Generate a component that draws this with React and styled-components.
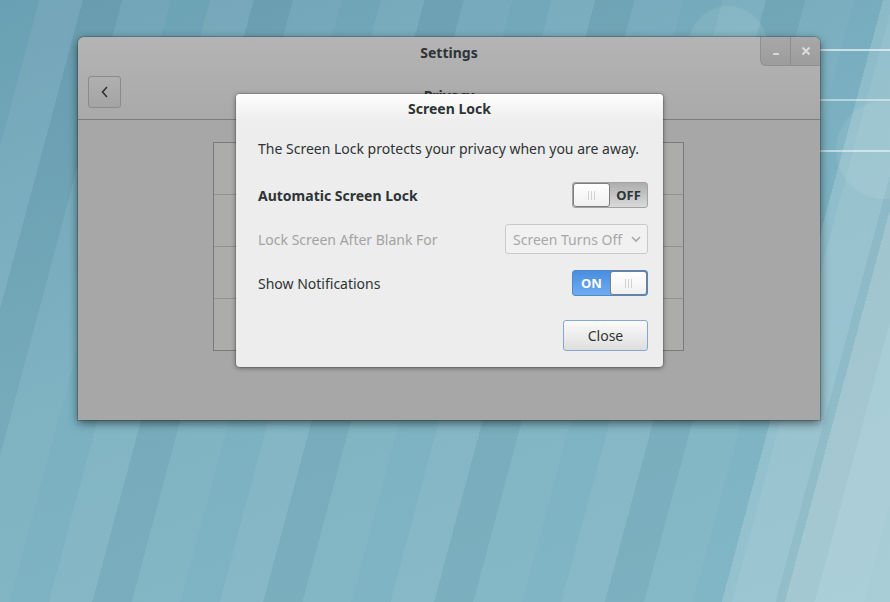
import React from 'react'
import styled, { createGlobalStyle } from 'styled-components'

const font = '"Noto Sans", "DejaVu Sans", sans-serif'
const ink = '#2e3436'

const GlobalStyle = createGlobalStyle`
  html, body {
    margin: 0;
    padding: 0;
  }
  body {
    font-family: ${font};
    font-size: 14px;
    color: ${ink};
  }
`

const wallLine = (y, a = 0.6) =>
  `linear-gradient(rgba(255,255,255,${a}), rgba(255,255,255,${a})) 820px ${y}px / 70px 2px no-repeat`

const Desktop = styled.div`
  width: 890px;
  height: 602px;
  overflow: hidden;
  box-sizing: border-box;
  padding: 37px 0 0 78px;
  background:
    ${wallLine(49)},
    ${wallLine(99, 0.45)},
    ${wallLine(150, 0.5)},
    radial-gradient(circle at 728px 45px, rgba(255,255,255,0.08) 0 38px, transparent 40px),
    radial-gradient(circle at 885px 150px, rgba(255,255,255,0.08) 0 48px, transparent 50px),
    linear-gradient(105deg, transparent 0 84%, rgba(255,255,255,0.16) 84% 90%, rgba(255,255,255,0.3) 90% 100%),
    repeating-linear-gradient(
      105deg,
      rgba(255,255,255,0) 0 38px,
      rgba(255,255,255,0.06) 38px 80px,
      rgba(0,0,0,0.03) 80px 118px,
      rgba(255,255,255,0.04) 118px 165px
    ),
    linear-gradient(160deg, #6aa0b3 0%, #7ab0c0 45%, #82b7c6 100%);
`

const Window = styled.div`
  position: relative;
  width: 742px;
  height: 383px;
  border-radius: 6px 6px 0 0;
  box-shadow: 0 3px 10px rgba(0, 0, 0, 0.55), 0 0 0 1px rgba(0, 0, 0, 0.18);
  display: flex;
  flex-direction: column;
  overflow: hidden;
`

const Header = styled.header`
  height: 82px;
  border-bottom: 1px solid #7c7c7c;
  background: linear-gradient(#b4b4b4, #a9a9a9);
  display: grid;
  grid-template-rows: 28px 1fr;
`

const HeaderRow = styled.div`
  display: grid;
  grid-template-columns: 1fr auto 1fr;
  align-items: ${(p) => (p.$top ? 'start' : 'center')};
  padding: 0 ${(p) => (p.$top ? 0 : 10)}px;
`

const Title = styled.div`
  font-weight: bold;
  font-size: 14px;
  color: ${ink};
  padding-top: ${(p) => p.$pt || 0}px;
`

const BackButton = styled.button`
  width: 33px;
  height: 32px;
  padding: 0;
  border: 1px solid #8a8a8a;
  border-radius: 3px;
  background: linear-gradient(#b0b0b0, #a4a4a4);
  display: flex;
  align-items: center;
  justify-content: center;
  justify-self: start;
`

const Controls = styled.div`
  justify-self: end;
  display: flex;
  height: 28px;
  border-left: 1px solid #909090;
  border-bottom: 1px solid #909090;
  border-bottom-left-radius: 6px;
  background: linear-gradient(#a8a8a8, #9c9c9c);
  overflow: hidden;
`

const ControlButton = styled.div`
  width: 29px;
  display: flex;
  align-items: center;
  justify-content: center;
  & + & {
    border-left: 1px solid #8e8e8e;
  }
`

const Body = styled.main`
  flex: 1;
  background: #a7a7a7;
  padding: 22px 0 0 135px;
`

const List = styled.div`
  width: 469px;
  border: 1px solid #7a7a7a;
  background: #acacab;
`

const ListRow = styled.div`
  height: 51px;
  & + & {
    border-top: 1px solid #919191;
  }
`

const Dialog = styled.div`
  position: absolute;
  left: 158px;
  top: 57px;
  width: 427px;
  height: 273px;
  box-sizing: border-box;
  background: #ededed;
  border-radius: 4px;
  box-shadow: 0 1px 5px rgba(0, 0, 0, 0.45), 0 0 0 1px rgba(0, 0, 0, 0.12);
  display: flex;
  flex-direction: column;
`

const DialogTitle = styled.div`
  height: 28px;
  border-radius: 4px 4px 0 0;
  background: linear-gradient(#fefefe, #ededed);
  display: flex;
  align-items: center;
  justify-content: center;
  font-weight: bold;
  font-size: 14px;
`

const DialogBody = styled.div`
  padding: 18px 15px 16px 22px;
  display: flex;
  flex-direction: column;
`

const Text = styled.p`
  margin: 0;
  line-height: 18px;
  white-space: nowrap;
`

const Rows = styled.div`
  margin-top: 15px;
  display: grid;
  grid-template-columns: 1fr auto;
  grid-auto-rows: 44px;
  align-items: center;
`

const Label = styled.span`
  font-weight: ${(p) => (p.$bold ? 'bold' : 'normal')};
  color: ${(p) => (p.$disabled ? '#a3a3a3' : ink)};
`

const Switch = styled.div`
  width: 76px;
  height: 26px;
  box-sizing: border-box;
  border-radius: 3px;
  border: 1px solid ${(p) => (p.$on ? '#4c88cf' : '#a3a3a3')};
  background: ${(p) =>
    p.$on
      ? 'linear-gradient(#4a8ee0, #6eabf0)'
      : 'linear-gradient(#aeaeae, #dadada)'};
  display: flex;
  flex-direction: ${(p) => (p.$on ? 'row-reverse' : 'row')};
  align-items: stretch;
  justify-self: end;
  overflow: hidden;
`

const Knob = styled.div`
  width: 37px;
  box-sizing: border-box;
  border: 1px solid #7d7d7d;
  border-radius: 3px;
  background: linear-gradient(#ffffff, #f0f0f0);
  display: flex;
  align-items: center;
  justify-content: center;
  gap: 2px;
  span {
    width: 1px;
    height: 9px;
    background: #d2d2d2;
  }
`

const SwitchLabel = styled.div`
  flex: 1;
  display: flex;
  align-items: center;
  justify-content: center;
  font-weight: bold;
  font-size: 13px;
  color: ${(p) => (p.$on ? '#ffffff' : ink)};
`

const Combo = styled.div`
  width: 143px;
  height: 30px;
  box-sizing: border-box;
  border: 1px solid #cacaca;
  border-radius: 3px;
  background: #f1f1f1;
  display: flex;
  align-items: center;
  justify-content: space-between;
  padding: 0 6px 0 7px;
  color: #a8a8a8;
  justify-self: end;
  white-space: nowrap;
`

const Footer = styled.div`
  margin-top: 15px;
  display: flex;
  justify-content: flex-end;
`

const Button = styled.button`
  width: 85px;
  height: 31px;
  border: 1px solid #7fa8d9;
  border-radius: 3px;
  background: linear-gradient(#fbfbfb, #dedede);
  font-family: ${font};
  font-size: 14px;
  color: ${ink};
  padding: 0;
`

function Toggle({ on }) {
  return (
    <Switch $on={on}>
      <Knob>
        <span />
        <span />
        <span />
      </Knob>
      <SwitchLabel $on={on}>{on ? 'ON' : 'OFF'}</SwitchLabel>
    </Switch>
  )
}

export default function App() {
  return (
    <>
      <GlobalStyle />
      <Desktop>
        <Window>
          <Header>
            <HeaderRow $top>
              <span />
              <Title $pt={6}>Settings</Title>
              <Controls>
                <ControlButton>
                  <svg width="10" height="10" viewBox="0 0 10 10">
                    <rect x="2" y="7" width="6" height="2" fill="#d8d8d8" />
                  </svg>
                </ControlButton>
                <ControlButton>
                  <svg width="10" height="10" viewBox="0 0 10 10">
                    <path
                      d="M1.5 1.5 L8.5 8.5 M8.5 1.5 L1.5 8.5"
                      stroke="#dcdcdc"
                      strokeWidth="2"
                    />
                  </svg>
                </ControlButton>
              </Controls>
            </HeaderRow>
            <HeaderRow>
              <BackButton>
                <svg width="12" height="14" viewBox="0 0 12 14">
                  <path
                    d="M8 2 L3.5 7 L8 12"
                    fill="none"
                    stroke="#2e3436"
                    strokeWidth="1.6"
                  />
                </svg>
              </BackButton>
              <Title $pt={6}>Privacy</Title>
              <span />
            </HeaderRow>
          </Header>
          <Body>
            <List>
              <ListRow />
              <ListRow />
              <ListRow />
              <ListRow />
            </List>
          </Body>

          <Dialog>
            <DialogTitle>Screen Lock</DialogTitle>
            <DialogBody>
              <Text>The Screen Lock protects your privacy when you are away.</Text>
              <Rows>
                <Label $bold>Automatic Screen Lock</Label>
                <Toggle on={false} />
                <Label $disabled>Lock Screen After Blank For</Label>
                <Combo>
                  <span>Screen Turns Off</span>
                  <svg width="10" height="8" viewBox="0 0 10 8">
                    <path
                      d="M1 2 L5 6 L9 2"
                      fill="none"
                      stroke="#a8a8a8"
                      strokeWidth="1.6"
                    />
                  </svg>
                </Combo>
                <Label>Show Notifications</Label>
                <Toggle on />
              </Rows>
              <Footer>
                <Button>Close</Button>
              </Footer>
            </DialogBody>
          </Dialog>
        </Window>
      </Desktop>
    </>
  )
}
